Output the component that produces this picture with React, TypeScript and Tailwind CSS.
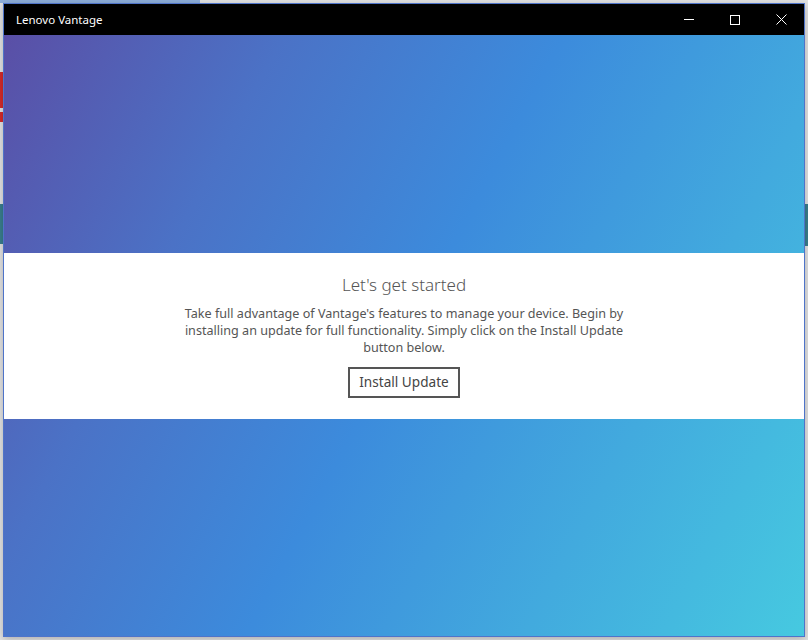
export default function App() {
  return (
    <div className="w-[808px] h-[640px] bg-[#e4e4e4] relative overflow-hidden font-['Segoe_UI','Noto_Sans',sans-serif]">
      {/* bits of the app behind */}
      <div className="absolute left-0 top-0 w-[200px] h-[3px] bg-[#8fb0dc]" />
      <div className="absolute left-0 top-[72px] w-[3px] h-[36px] bg-[#d62a2a]" />
      <div className="absolute left-0 top-[112px] w-[3px] h-[10px] bg-[#d62a2a]" />
      <div className="absolute left-0 top-[204px] w-[3px] h-[40px] bg-[#3a7f8e]" />
      <div className="absolute right-0 top-[204px] w-[3px] h-[42px] bg-[#3a7f8e]" />

      <div className="absolute left-[3px] top-[3px] w-[802px] h-[634px] border border-[#4f74c9] flex flex-col shadow-[0_2px_8px_rgba(0,0,0,0.25)]">
        <div className="h-[31px] bg-black flex items-center shrink-0">
          <span className="pl-[12px] text-[11.5px] text-white flex-1">Lenovo Vantage</span>
          <div className="w-[46px] h-[31px] flex items-center justify-center">
            <div className="w-[10px] h-px bg-white" />
          </div>
          <div className="w-[46px] h-[31px] flex items-center justify-center">
            <div className="w-[10px] h-[10px] border border-white" />
          </div>
          <div className="w-[46px] h-[31px] flex items-center justify-center">
            <svg width="11" height="11" viewBox="0 0 11 11">
              <path d="M0.5 0.5L10.5 10.5M10.5 0.5L0.5 10.5" stroke="white" strokeWidth="1" />
            </svg>
          </div>
        </div>
        <div className="flex-1 flex flex-col bg-[linear-gradient(118deg,#5a4fa6_0%,#4b72c6_25%,#3c8bdc_50%,#42aade_75%,#46c9e0_100%)]">
          <div className="h-[218px] shrink-0" />
          <div className="bg-white h-[166px] flex flex-col items-center pt-[20px]">
            <h1 className="text-[17px] leading-[24px] text-[#555] font-light">Let's get started</h1>
            <p className="mt-[8px] w-[460px] text-center text-[12.6px] leading-[17px] text-[#555]">
              Take full advantage of Vantage's features to manage your device. Begin by installing an update for full functionality. Simply click on the Install Update button below.
            </p>
            <button className="mt-[11px] h-[31px] px-[9px] border-2 border-[#555] text-[13.6px] text-[#444]">
              Install Update
            </button>
          </div>
        </div>
      </div>
    </div>
  )
}
